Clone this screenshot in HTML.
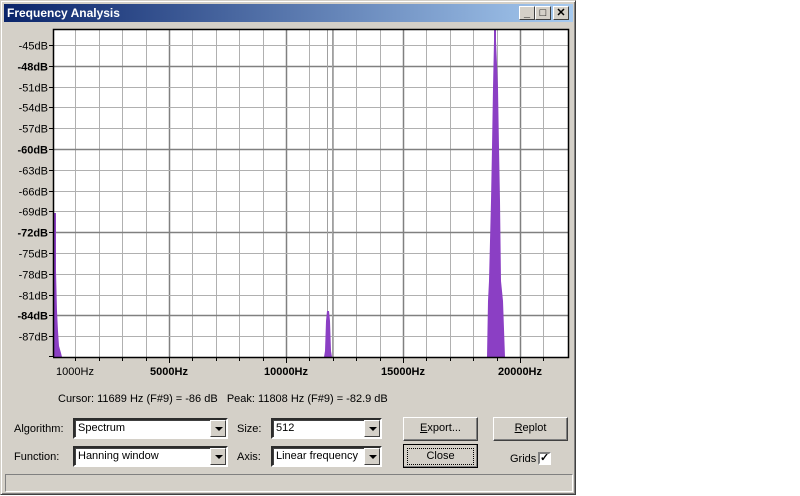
<!DOCTYPE html>
<html><head><meta charset="utf-8"><style>
body{margin:0;width:800px;height:496px;background:#fff;position:relative;overflow:hidden;font-family:"Liberation Sans",sans-serif;font-size:11px;}
.win{position:absolute;left:0;top:0;width:574px;height:493px;background:#d4d0c8;border:1px solid;border-color:#d4d0c8 #404040 #404040 #d4d0c8;box-shadow:inset 1px 1px #fff,inset -1px -1px #808080;}
.title{position:absolute;left:3px;top:3px;width:569px;height:18px;background:linear-gradient(90deg,#0a246a,#a6caf0);color:#fff;font-weight:bold;font-size:12px;line-height:18px;padding-left:3px;box-sizing:border-box}
.tb{position:absolute;top:5px;width:16px;height:14px;background:#d4d0c8;box-sizing:border-box;border:1px solid;border-color:#fff #404040 #404040 #fff;font-size:11px;text-align:center;line-height:12px;color:#000;font-weight:bold}
.lbl{position:absolute;color:#000}
.combo{position:absolute;height:21px;background:#fff;box-sizing:border-box;border:2px inset #e0e0e0;border-color:#808080 #fff #fff #808080;box-shadow:inset 1px 1px #404040;padding:2px 0 0 3px}
.combo .arr{position:absolute;right:0;top:0;width:16px;height:17px;background:#d4d0c8;box-sizing:border-box;border:1px solid;border-color:#fff #404040 #404040 #fff}
.combo .arr:after{content:"";position:absolute;left:4px;top:6px;border:4px solid transparent;border-top:4px solid #000;border-bottom:0}
.btn{position:absolute;width:75px;height:24px;box-sizing:border-box;border:1px solid;border-color:#fff #404040 #404040 #fff;box-shadow:inset -1px -1px #808080;text-align:center;line-height:21px}
</style></head><body>
<div class="win">
<div class="title">Frequency Analysis</div>
<div class="tb" style="left:518px">_</div>
<div class="tb" style="left:534px">□</div>
<div class="tb" style="left:552px">✕</div>
<svg id="g" style="position:absolute;left:0;top:0" width="574" height="400"></svg>
<div class="lbl" style="left:57px;top:392px">Cursor: 11689 Hz (F#9) = -86 dB&nbsp;&nbsp;&nbsp;Peak: 11808 Hz (F#9) = -82.9 dB</div>
<div class="lbl" style="left:13px;top:422px">Algorithm:</div>
<div class="lbl" style="left:13px;top:450px">Function:</div>
<div class="lbl" style="left:236px;top:422px">Size:</div>
<div class="lbl" style="left:236px;top:450px">Axis:</div>
<div class="combo" style="left:72px;top:417px;width:155px">Spectrum<div class="arr"></div></div>
<div class="combo" style="left:72px;top:445px;width:155px">Hanning window<div class="arr"></div></div>
<div class="combo" style="left:270px;top:417px;width:111px">512<div class="arr"></div></div>
<div class="combo" style="left:270px;top:445px;width:111px">Linear frequency<div class="arr"></div></div>
<div class="btn" style="left:402px;top:416px"><u>E</u>xport...</div>
<div class="btn" style="left:492px;top:416px"><u>R</u>eplot</div>
<div class="btn" style="left:402px;top:443px;border:1px solid #000;outline:none"><span style="display:block;margin:3px;border:1px dotted #000;line-height:15px">Close</span></div>
<div class="lbl" style="left:509px;top:452px">Grids</div>
<div style="position:absolute;left:537px;top:451px;width:13px;height:13px;background:#fff;box-sizing:border-box;border:2px solid;border-color:#808080 #fff #fff #808080;font-size:11px;line-height:9px;text-align:center;font-weight:bold">✓</div>
<div style="position:absolute;left:4px;top:473px;width:568px;height:18px;box-sizing:border-box;border:1px solid;border-color:#808080 #fff #fff #808080"></div>
</div>
<script>
var s='';var L=52,T=28,R=567,B=356;
s+='<rect x="'+L+'" y="'+T+'" width="'+(R-L)+'" height="'+(B-T)+'" fill="#fff"/>';
for(var n=1;n<=21;n++){var x=Math.round(168+23.4*(n-5))+.5;var d=n%5==0;
s+='<line x1="'+x+'" y1="'+T+'" x2="'+x+'" y2="'+B+'" stroke="'+(d?'#808080':'#b0b0b0')+'" stroke-width="'+(d?1.5:1)+'"/>';
s+='<line x1="'+x+'" y1="'+B+'" x2="'+x+'" y2="'+(B+(d?6:4))+'" stroke="#000"/>';}
for(var k=0;k<=14;k++){var y=Math.round(44+20.8*k)+.5;var db=-45-3*k;var b=(db%12==0);
s+='<line x1="'+L+'" y1="'+y+'" x2="'+R+'" y2="'+y+'" stroke="'+(b?'#808080':'#b0b0b0')+'" stroke-width="'+(b?1.5:1)+'"/>';
s+='<line x1="48" y1="'+y+'" x2="52" y2="'+y+'" stroke="#000"/>';
s+='<text x="47" y="'+(y+4)+'" text-anchor="end" font-size="11" font-family="Liberation Sans" '+(b?'font-weight="bold"':'')+'>'+db+'dB</text>';}
s+='<line x1="48" y1="355.5" x2="52" y2="355.5" stroke="#000"/>';
s+='<line x1="326.5" y1="'+T+'" x2="326.5" y2="'+B+'" stroke="#a0a0a0"/><line x1="331.5" y1="'+T+'" x2="331.5" y2="'+B+'" stroke="#a0a0a0"/>';
s+='<polygon fill="#8b3fc4" points="493,28 495,28 495,40 497,87 498,147 499,200 500,280 502,300 504,356 486,356 487,300 488,280 490,200 491,147 492,87 493,40"/>';
s+='<polygon fill="#8b3fc4" points="326,310 328,310 329,320 330,350 331,356 323,356 324,350 325,320"/>';
s+='<polygon fill="#8b3fc4" points="52,212 55,212 55,270 56,310 57,330 58,345 60,352 61,356 52,356"/>';
s+='<polyline points="'+L+'.5,'+B+' '+L+'.5,'+T+'.5 '+R+'.5,'+T+'.5 '+R+'.5,'+B+'.5 '+L+','+B+'.5" fill="none" stroke="#000" stroke-width="1.5"/>';
var hz=[[74,'1000Hz',0],[168,'5000Hz',1],[285,'10000Hz',1],[402,'15000Hz',1],[519,'20000Hz',1]];
hz.forEach(function(h){s+='<text x="'+h[0]+'" y="374" text-anchor="middle" font-size="11" font-family="Liberation Sans" '+(h[2]?'font-weight="bold"':'')+'>'+h[1]+'</text>';});
document.getElementById('g').innerHTML=s;
</script>
</body></html>
